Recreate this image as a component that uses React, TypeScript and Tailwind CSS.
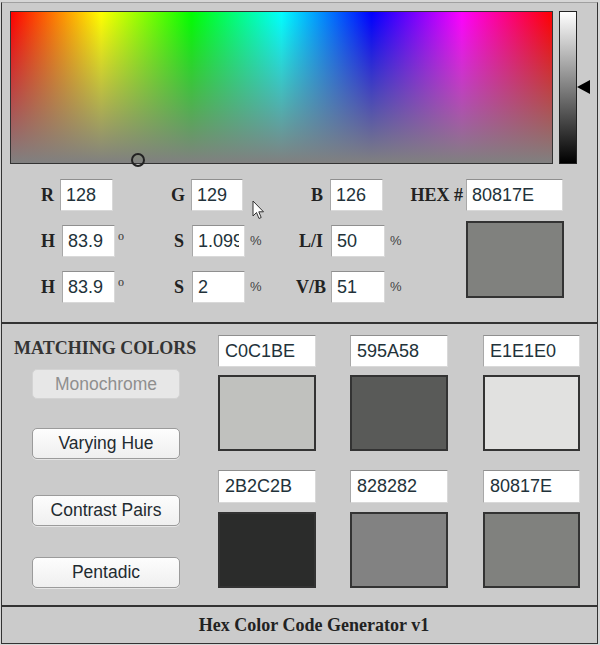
import type { ReactNode } from 'react';

function Lbl({ children }: { children: ReactNode }) {
  return (
    <span className="font-['Liberation_Serif','Times_New_Roman',serif] font-bold text-[18px] leading-none text-[#222]">
      {children}
    </span>
  );
}

function Field({ value, className = '' }: { value: string; className?: string }) {
  return (
    <input
      readOnly
      value={value}
      className={`shrink-0 min-w-0 bg-white border border-[#d9d9d9] border-t-[#8f8f8f] border-l-[#a8a8a8] px-[5px] text-[18px] text-[#22323a] font-['Liberation_Sans',Arial,sans-serif] outline-none ${className}`}
    />
  );
}

function Pct({ className = '' }: { className?: string }) {
  return (
    <span className={`font-['Liberation_Sans',Arial,sans-serif] text-[13px] text-[#444] ${className}`}>%</span>
  );
}

function Deg() {
  return (
    <span className="self-start mt-[5px] font-['Liberation_Serif',serif] text-[12px] leading-none text-[#333]">o</span>
  );
}

function Btn({
  children,
  disabled = false,
  className = '',
}: {
  children: ReactNode;
  disabled?: boolean;
  className?: string;
}) {
  return (
    <button
      disabled={disabled}
      className={`ml-[30px] w-[148px] shrink-0 rounded-[5px] border text-[17.5px] font-['Liberation_Sans',Arial,sans-serif] ${
        disabled
          ? 'border-[#d3d3d3] bg-[#e7e7e7] text-[#8f8f8f]'
          : 'border-[#9b9b9b] bg-[linear-gradient(to_bottom,#fdfdfd,#efefef)] text-[#1f2b30] shadow-[0_1px_0_#e6e6e6]'
      } ${className}`}
    >
      {children}
    </button>
  );
}

const matches = [
  ['C0C1BE', '2B2C2B'],
  ['595A58', '828282'],
  ['E1E1E0', '80817E'],
];

export default function App() {
  return (
    <div className="w-[600px] h-[645px] bg-[#d6d6d6] pt-[2px] pl-[1px] pr-[2px] pb-[1px]">
      <div className="h-full flex flex-col border border-[#333] border-t-[#a0a0a0] bg-[#cbcbcb]">
        {/* picker + values */}
        <div className="relative h-[321px] shrink-0 border-b-2 border-[#333] flex flex-col">
          <div className="flex items-start mt-[8px] ml-[8px]">
            <div className="relative w-[543px] h-[153px] border border-[#333] bg-[linear-gradient(to_right,#ff0000,#ffff00,#00ff00,#00ffff,#0000ff,#ff00ff,#ff0000)]">
              <div className="absolute inset-0 bg-[linear-gradient(to_bottom,rgba(128,128,128,0),#808080)]" />
              <div className="absolute left-[120px] top-[141px] w-[14px] h-[14px] rounded-full border-2 border-[#222]" />
            </div>
            <div className="relative ml-[6px] w-[18px] h-[153px] border border-[#222] bg-[linear-gradient(to_bottom,#ffffff,#000000)]">
              <svg className="absolute left-[17px] top-[68px]" width="14" height="14" viewBox="0 0 14 14">
                <polygon points="0,7 13,0 13,14" fill="#000" />
              </svg>
            </div>
          </div>

          <div className="flex items-center h-[32px] mt-[15px]">
            <div className="w-[58px] shrink-0 flex justify-end pr-[6px]"><Lbl>R</Lbl></div>
            <Field value="128" className="w-[53px] h-[32px]" />
            <div className="w-[78px] shrink-0 flex justify-end pr-[6px]"><Lbl>G</Lbl></div>
            <Field value="129" className="w-[52px] h-[32px]" />
            <div className="w-[87px] shrink-0 flex justify-end pr-[7px]"><Lbl>B</Lbl></div>
            <Field value="126" className="w-[53px] h-[32px]" />
            <div className="w-[83px] shrink-0 flex justify-end pr-[3px]"><Lbl>HEX #</Lbl></div>
            <Field value="80817E" className="w-[97px] h-[32px]" />
          </div>

          <div className="flex mt-[10px]">
            <div className="w-[464px] shrink-0 pt-[4px]">
              <div className="flex items-center h-[32px]">
                <div className="w-[60px] shrink-0 flex justify-end pr-[7px]"><Lbl>H</Lbl></div>
                <Field value="83.9" className="w-[53px] h-[32px]" />
                <div className="w-[77px] h-full shrink-0 flex justify-between items-center pl-[3px] pr-[8px]">
                  <Deg />
                  <Lbl>S</Lbl>
                </div>
                <Field value="1.099" className="w-[53px] h-[32px]" />
                <div className="w-[86px] shrink-0 flex justify-between items-center pl-[5px] pr-[8px]">
                  <Pct />
                  <Lbl>L/I</Lbl>
                </div>
                <Field value="50" className="w-[54px] h-[32px]" />
                <Pct className="ml-[5px]" />
              </div>
              <div className="flex items-center h-[32px] mt-[14px]">
                <div className="w-[60px] shrink-0 flex justify-end pr-[7px]"><Lbl>H</Lbl></div>
                <Field value="83.9" className="w-[53px] h-[32px]" />
                <div className="w-[77px] h-full shrink-0 flex justify-between items-center pl-[3px] pr-[8px]">
                  <Deg />
                  <Lbl>S</Lbl>
                </div>
                <Field value="2" className="w-[53px] h-[32px]" />
                <div className="w-[86px] shrink-0 flex justify-between items-center pl-[5px] pr-[5px]">
                  <Pct />
                  <Lbl>V/B</Lbl>
                </div>
                <Field value="51" className="w-[54px] h-[32px]" />
                <Pct className="ml-[5px]" />
              </div>
            </div>
            <div className="w-[98px] h-[77px] shrink-0 border-2 border-[#333] bg-[#80817E]" />
          </div>

          {/* mouse pointer */}
          <svg className="absolute left-[250px] top-[197px]" width="13" height="20" viewBox="0 0 13 20">
            <path d="M1 1 L1 16 L4.5 12.5 L7 18.5 L9.2 17.5 L6.8 11.8 L11.5 11.8 Z" fill="#fff" stroke="#333" strokeWidth="1" strokeLinejoin="round" />
          </svg>
        </div>

        {/* matching colors */}
        <div className="h-[283px] shrink-0 border-b-2 border-[#333] flex">
          <div className="w-[216px] shrink-0 flex flex-col">
            <div className="mt-[14px] ml-[12px] h-[20px] leading-[20px] font-['Liberation_Serif','Times_New_Roman',serif] font-bold text-[18px] text-[#333] whitespace-nowrap">
              MATCHING COLORS
            </div>
            <Btn disabled className="mt-[11px] h-[30px]">Monochrome</Btn>
            <Btn className="mt-[29px] h-[31px]">Varying Hue</Btn>
            <Btn className="mt-[36px] h-[31px]">Contrast Pairs</Btn>
            <Btn className="mt-[31px] h-[31px]">Pentadic</Btn>
          </div>
          <div className="mt-[11px] flex gap-[34px] h-fit">
            {matches.map(([a, b], i) => (
              <div key={i} className={`flex flex-col ${i === 2 ? 'w-[97px] ml-[1px]' : 'w-[98px]'}`}>
                <Field value={a} className="w-full h-[32px] pl-[6px]" />
                <div className="mt-[8px] h-[76px] border-2 border-[#333]" style={{ backgroundColor: `#${a}` }} />
                <Field value={b} className="w-full h-[33px] mt-[19px] pl-[6px]" />
                <div className="mt-[9px] h-[76px] border-2 border-[#333]" style={{ backgroundColor: `#${b}` }} />
              </div>
            ))}
          </div>
        </div>

        {/* footer */}
        <div className="flex-1 flex items-center justify-center pl-[29px] font-['Liberation_Serif','Times_New_Roman',serif] font-bold text-[18px] text-[#222]">
          Hex Color Code Generator v1
        </div>
      </div>
    </div>
  );
}
